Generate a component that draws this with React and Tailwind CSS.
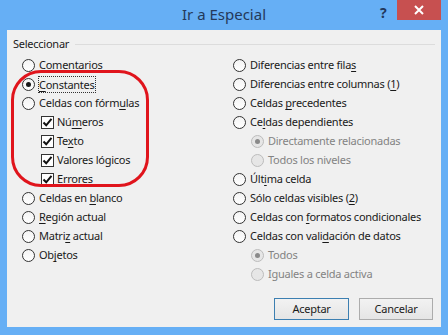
import React from 'react';

const LEFT = [
  { type: 'radio', label: ['Comentarios'] },
  { type: 'radio', label: ['', 'C', 'onstantes'], checked: true, focus: true },
  { type: 'radio', label: ['Celdas con fórm', 'u', 'las'] },
  { type: 'check', label: ['Nú', 'm', 'eros'] },
  { type: 'check', label: ['Te', 'x', 'to'] },
  { type: 'check', label: ['Valores lógicos'] },
  { type: 'check', label: ['', 'E', 'rrores'] },
  { type: 'radio', label: ['Celdas en ', 'b', 'lanco'] },
  { type: 'radio', label: ['', 'R', 'egión actual'] },
  { type: 'radio', label: ['Matri', 'z', ' actual'] },
  { type: 'radio', label: ['Ob', 'j', 'etos'] },
];

const RIGHT = [
  { type: 'radio', label: ['Diferencias entre fila', 's', ''] },
  { type: 'radio', label: ['Diferencias entre columnas (', '1', ')'] },
  { type: 'radio', label: ['Celdas ', 'p', 'recedentes'] },
  { type: 'radio', label: ['Ce', 'l', 'das dependientes'] },
  { type: 'sub', label: ['Directamente relacionadas'], checked: true },
  { type: 'sub', label: ['Todos los niveles'] },
  { type: 'radio', label: ['Últ', 'i', 'ma celda'] },
  { type: 'radio', label: ['Sólo celdas visibles (', '2', ')'] },
  { type: 'radio', label: ['Celdas con ', 'f', 'ormatos condicionales'] },
  { type: 'radio', label: ['Celdas con vali', 'd', 'ación de datos'] },
  { type: 'sub', label: ['Todos'], checked: true },
  { type: 'sub', label: ['Iguales a celda activa'] },
];

function Label({ parts }) {
  return (
    <span className="whitespace-pre">
      {parts[0]}
      {parts[1] && <span className="underline underline-offset-[2px]">{parts[1]}</span>}
      {parts[2]}
    </span>
  );
}

function Radio({ checked, disabled }) {
  return (
    <span
      className={`flex h-[13px] w-[13px] shrink-0 items-center justify-center rounded-full border ${
        disabled ? 'border-[#bcbcbc] bg-[#e6e6e6]' : 'border-[#333] bg-gradient-to-b from-[#f4f4f4] to-white'
      }`}
    >
      {checked && (
        <span className={`h-[5px] w-[5px] rounded-full ${disabled ? 'bg-[#8a8a8a]' : 'bg-[#1a1a1a]'}`} />
      )}
    </span>
  );
}

function Check() {
  return (
    <span className="flex h-[13px] w-[13px] shrink-0 items-center justify-center border border-[#333] bg-white">
      <svg width="11" height="11" viewBox="0 0 11 11">
        <path d="M1.5 5.5 L4.2 8.3 L9.5 1.8" fill="none" stroke="#111" strokeWidth="2" />
      </svg>
    </span>
  );
}

function Row({ item }) {
  if (item.type === 'check') {
    return (
      <div className="flex h-[19px] items-center gap-[3px] pl-[19px]">
        <Check />
        <Label parts={item.label} />
      </div>
    );
  }
  if (item.type === 'sub') {
    return (
      <div className="flex h-[19px] items-center gap-[4px] pl-[18px] text-[#838383]">
        <Radio checked={item.checked} disabled />
        <Label parts={item.label} />
      </div>
    );
  }
  return (
    <div className="flex h-[19px] items-center gap-[4px]">
      <Radio checked={item.checked} />
      {item.focus ? (
        <span className="-my-px -ml-px border border-dotted border-[#333] leading-[15px]">
          <Label parts={item.label} />
        </span>
      ) : (
        <Label parts={item.label} />
      )}
    </div>
  );
}

export default function App() {
  return (
    <div
      className="relative flex h-[335px] w-[448px] flex-col bg-[#66aff5] text-[11px] tracking-[-0.25px] text-[#1a1a1a]"
      style={{ fontFamily: '"Segoe UI", "Noto Sans", sans-serif' }}
    >
      {/* barra de título */}
      <div className="relative flex h-[30px] shrink-0 items-center justify-center tracking-normal">
        <span className="mt-[-2px] text-[15px] text-[#24395a]">Ir a Especial</span>
        <span className="absolute left-[380px] top-[2px] text-[14px] font-bold text-[#22385c]">?</span>
        <div className="absolute left-[397px] top-0 flex h-[20px] w-[44px] items-center justify-center bg-[#c75050]">
          <svg width="10" height="10" viewBox="0 0 10 10">
            <path d="M1 1 L9 9 M9 1 L1 9" stroke="white" strokeWidth="2" />
          </svg>
        </div>
      </div>

      {/* área de cliente */}
      <div className="mx-[7px] flex h-[297px] flex-col bg-[#f0f0f0]">
        <div className="mt-[6px] flex h-[16px] items-center pl-[6px] pr-[6px]">
          <span>Seleccionar</span>
          <span className="ml-[6px] h-px flex-1 bg-[#dcdcdc]" />
        </div>

        <div className="mt-[4px] grid grid-cols-[226px_1fr]">
          <div className="pl-[15px]">
            {LEFT.map((item, i) => (
              <Row key={i} item={item} />
            ))}
          </div>
          <div>
            {RIGHT.map((item, i) => (
              <Row key={i} item={item} />
            ))}
          </div>
        </div>

        <div className="mt-[14px] flex justify-end gap-[10px] pr-[8px]">
          <button className="h-[22px] w-[75px] border border-[#3c7fb1] bg-gradient-to-b from-[#f2f2f2] to-[#e5e5e5]">
            Aceptar
          </button>
          <button className="h-[22px] w-[74px] border border-[#acacac] bg-gradient-to-b from-[#f2f2f2] to-[#e5e5e5]">
            Cancelar
          </button>
        </div>
      </div>

      {/* marca roja */}
      <div className="pointer-events-none absolute left-[11px] top-[70px] h-[117px] w-[138px] rounded-[30px] border-[3px] border-[#e0141c]" />
    </div>
  );
}
